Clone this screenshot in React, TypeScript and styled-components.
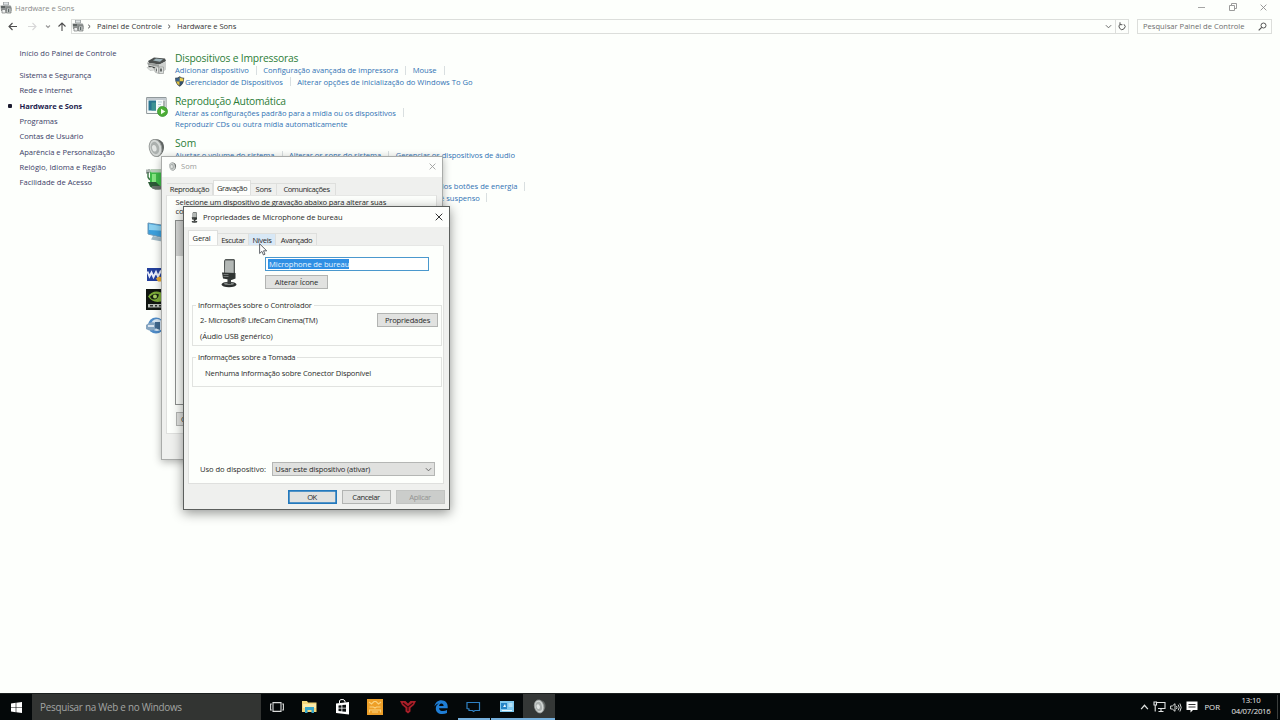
import React from "react";
import styled, { createGlobalStyle, css } from "styled-components";

const Global = createGlobalStyle`
  * { box-sizing: border-box; }
  body { margin: 0; overflow: hidden; background: #fdfffc; }
`;

const Screen = styled.div`
  position: relative;
  width: 1280px;
  height: 720px;
  display: flex;
  flex-direction: column;
  overflow: hidden;
  background: #fdfffc;
  color: #2a2b2a;
  font-family: "Open Sans", "Noto Sans", sans-serif;
  font-size: 7.6px;
  white-space: nowrap;
  cursor: default;
`;

const Text = styled.span<{ $ls?: number; $size?: number; $ml?: number }>`
  letter-spacing: ${(p) => p.$ls ?? 0}px;
  margin-left: ${(p) => p.$ml ?? 0}px;
  ${(p) => p.$size && css`font-size: ${p.$size}px;`}
`;

/* ---------- explorer window ---------- */

const TitleBar = styled.header`
  height: 15px;
  display: flex;
  align-items: center;
  padding: 0 13px 0 0;
  gap: 3px;
  color: #8b8b8b;
`;

const WindowControls = styled.div`
  margin-left: auto;
  margin-top: -1px;
  display: flex;
  align-items: center;
  gap: 23px;
`;

const NavRow = styled.nav`
  height: 21px;
  display: flex;
  align-items: center;
  padding: 1px 8px 0 8px;
`;

const Arrows = styled.div`
  width: 63px;
  display: flex;
  align-items: center;
`;

const AddressBar = styled.div`
  width: 1058px;
  height: 15px;
  display: flex;
  align-items: center;
  border: 1px solid #dcdedb;
  color: #333;
`;

const Crumb = styled.span<{ $l: number }>`
  margin: 0 4px 0 ${(p) => p.$l}px;
  display: flex;
`;

const AddressTools = styled.div`
  margin-left: auto;
  height: 13px;
  display: flex;
  align-items: center;
`;

const Refresh = styled.div`
  width: 13px;
  height: 13px;
  margin-left: 3px;
  display: flex;
  align-items: center;
  justify-content: center;
  border-left: 1px solid #dcdedb;
`;

const SearchField = styled.div`
  width: 135px;
  height: 15px;
  margin-left: 8px;
  padding: 0 4px 0 5px;
  display: flex;
  align-items: center;
  justify-content: space-between;
  border: 1px solid #dcdedb;
  color: #6e6e6e;
`;

const Body = styled.div`
  flex: 1;
  display: flex;
`;

const Sidebar = styled.aside`
  width: 146px;
  padding: 9px 0 0 7px;
  color: #3b3d66;
`;

const SideItem = styled.div<{ $active?: boolean; $home?: boolean }>`
  height: 15.33px;
  display: flex;
  align-items: center;
  margin-bottom: ${(p) => (p.$home ? 7 : 0)}px;
  font-weight: ${(p) => (p.$active ? 700 : 400)};
  color: ${(p) => (p.$active ? "#1d1d4e" : "inherit")};
`;

const Bullet = styled.span<{ $on?: boolean }>`
  width: 4px;
  height: 4px;
  margin: 1px 7.5px 0 1px;
  border-radius: 1px;
  background: ${(p) => (p.$on ? "#1b1b30" : "transparent")};
`;

const Categories = styled.main`
  padding-top: 16px;
`;

const Category = styled.section<{ $h: number }>`
  height: ${(p) => p.$h}px;
  display: flex;
`;

const IconCell = styled.div<{ $top: number }>`
  width: 29px;
  padding-top: ${(p) => p.$top}px;
`;

const CategoryTitle = styled.h2`
  margin: 0;
  height: 12.5px;
  line-height: 13px;
  font-weight: 400;
  font-size: 10.3px;
  color: #2c7d38;
`;

const LinkRow = styled.div<{ $indent?: number }>`
  height: 11.5px;
  display: flex;
  align-items: center;
  color: #3173b4;
  padding-left: ${(p) => p.$indent ?? 0}px;
`;

const Divider = styled.i<{ $l?: number; $r?: number }>`
  width: 1px;
  height: 9px;
  margin: 0 ${(p) => p.$r ?? 6.5}px 0 ${(p) => p.$l ?? 7}px;
  background: #d9dfe0;
`;

/* ---------- dialogs ---------- */

const Dialog = styled.div<{ $x: number; $y: number; $w: number; $h: number; $front?: boolean }>`
  position: absolute;
  left: ${(p) => p.$x}px;
  top: ${(p) => p.$y}px;
  width: ${(p) => p.$w}px;
  height: ${(p) => p.$h}px;
  display: flex;
  flex-direction: column;
  background: #eff0ee;
  border: 1px solid ${(p) => (p.$front ? "#5c5f5d" : "#a9aba9")};
  box-shadow: ${(p) => (p.$front ? "0 3px 11px rgba(0,0,0,.42)" : "0 2px 8px rgba(0,0,0,.3)")};
`;

const DialogTitle = styled.div<{ $front?: boolean }>`
  height: 20px;
  flex: none;
  display: flex;
  align-items: center;
  padding: ${(p) => (p.$front ? "0 6px 0 7px" : "0 6px 2px 6px")};
  background: #fdfefc;
  color: ${(p) => (p.$front ? "#2a2b2a" : "#9a9c9a")};
  > svg:last-child { margin-left: auto; }
`;

const Tabs = styled.div<{ $pad: number }>`
  display: flex;
  align-items: flex-end;
  height: 18px;
  flex: none;
  padding-left: ${(p) => p.$pad}px;
`;

const Tab = styled.div<{ $w: number; $active?: boolean; $hover?: boolean; $pb?: number }>`
  width: ${(p) => p.$w}px;
  height: ${(p) => (p.$active ? 15 : 12)}px;
  display: flex;
  align-items: center;
  justify-content: center;
  border: 1px solid #dedfdd;
  border-bottom: 0;
  border-left-width: ${(p) => (p.$active ? 1 : 0)}px;
  background: ${(p) => (p.$active ? "#fdfefc" : p.$hover ? "#d8e8f6" : "#eff0ee")};
  padding-bottom: ${(p) => p.$pb ?? 0}px;
`;

const Panel = styled.div<{ $h: number }>`
  height: ${(p) => p.$h}px;
  flex: none;
  margin: 0 5px 0 4px;
  background: #fdfffc;
  border: 1px solid #dfe0de;
  border-top-color: #e6e7e5;
`;

const DeviceIntro = styled.p`
  margin: 0;
  padding: 2px 0 0 8.5px;
  line-height: 9.3px;
`;

const DeviceList = styled.div`
  width: 250px;
  height: 185px;
  margin: 3px 0 0 8px;
  border: 1px solid #8c8f8d;
`;

const SelectedDevice = styled.div`
  height: 35px;
  background: #d4d6d4;
`;

const Button = styled.div<{ $w: number; $kind?: "default" | "disabled" }>`
  width: ${(p) => p.$w}px;
  height: 14px;
  display: flex;
  align-items: center;
  justify-content: center;
  background: #e1e2e0;
  border: 1px solid #b2b4b2;
  ${(p) => p.$kind === "default" && css`border-color: #2379bd; box-shadow: inset 0 0 0 .7px #2379bd;`}
  ${(p) => p.$kind === "disabled" && css`background: #cbcdcb; border-color: #c2c4c2; color: #929492;`}
`;

const ConfigureButton = styled(Button)`
  margin: 7px 0 0 9px;
  justify-content: flex-start;
  padding-left: 4px;
`;

const DeviceHeader = styled.div`
  height: 49px;
  display: flex;
  padding: 11px 0 0 31px;
  gap: 27px;
  > svg { margin-top: 1px; }
`;

const NameColumn = styled.div`
  display: flex;
  flex-direction: column;
  gap: 4px;
`;

const NameInput = styled.div`
  width: 164px;
  height: 14px;
  display: flex;
  align-items: center;
  border: 1px solid #4a98cd;
  padding-left: 2px;
  background: #fff;
`;

const Selection = styled.span`
  height: 10px;
  line-height: 10px;
  padding-left: 1px;
  background: #2f8fe4;
  color: #e8f5ff;
`;

const Group = styled.fieldset<{ $h: number; $mt: number }>`
  width: 250px;
  height: ${(p) => p.$h}px;
  margin: ${(p) => p.$mt}px 0 0 3px;
  padding: 0;
  border: 1px solid #e1e3e0;
  min-width: 0;
`;

const Legend = styled.legend`
  margin-left: 3px;
  padding: 0 2px;
  height: 10px;
  line-height: 10px;
`;

const GroupRow = styled.div<{ $pl: number; $h: number }>`
  height: ${(p) => p.$h}px;
  padding: 0 3px 0 ${(p) => p.$pl}px;
  display: flex;
  align-items: center;
  justify-content: space-between;
`;

const UsageRow = styled.div`
  display: flex;
  align-items: center;
  gap: 6.5px;
  margin: 75px 0 0 11px;
`;

const Select = styled.div`
  width: 162.500px;
  height: 14px;
  display: flex;
  align-items: center;
  justify-content: space-between;
  padding: 0 2px;
  background: #e0e1df;
  border: 1px solid #b4b6b4;
`;

const DialogButtons = styled.div`
  flex: 1;
  display: flex;
  align-items: center;
  justify-content: flex-end;
  gap: 5px;
  padding-right: 4px;
`;

const PointerLayer = styled.div`
  position: absolute;
  left: 259px;
  top: 243px;
`;

/* ---------- taskbar ---------- */

const Taskbar = styled.footer`
  height: 27px;
  flex: none;
  display: flex;
  background: #040809;
  border-top: 1px solid #1c201f;
  color: #e9eae9;
`;

const StartButton = styled.div`
  width: 32px;
  display: flex;
  align-items: center;
  justify-content: center;
`;

const TaskSearch = styled.div`
  width: 229px;
  display: flex;
  align-items: center;
  padding-left: 8px;
  background: #323432;
  color: #a2a4a2;
`;

const TaskItem = styled.div<{ $open?: boolean; $active?: boolean }>`
  width: 32px;
  margin-right: .8px;
  display: flex;
  align-items: center;
  justify-content: center;
  background: ${(p) => (p.$active ? "#343736" : "transparent")};
  border-bottom: 2px solid ${(p) => (p.$open ? "#76b0dd" : "transparent")};
  padding-top: 1px;
`;

const Tray = styled.div`
  margin-left: auto;
  padding-right: 2px;
  display: flex;
  align-items: center;
  gap: 4px;
`;

const Clock = styled.div`
  width: 54px;
  padding: 0 4px 2px 5px;
  display: flex;
  flex-direction: column;
  align-items: center;
  line-height: 11px;
  border-right: 1px solid #3b3e3d;
`;

/* ---------- icons ---------- */

const PrinterSmall = () => (
  <svg width="12" height="12" viewBox="0 0 12 12">
    <path d="M3.500 0h5v3h-5z" fill="#dfe4e5" stroke="#8a8f90" strokeWidth=".7" />
    <path d="M.500 3.500h10l1 1.500v4H1z" fill="#8f9493" />
    <path d="M1 4h4v2H1z" fill="#5e6463" />
    <path d="M2 7.500h3.500V11H2z" fill="#eef0f0" stroke="#777a79" strokeWidth=".7" />
    <path d="M6.500 6h4.500v5H6.500z" fill="#c9cdcc" stroke="#6d7271" strokeWidth=".7" />
    <path d="M8.700 7v3" stroke="#44504f" />
  </svg>
);

const PrinterIcon = () => (
  <svg width="22" height="20" viewBox="0 0 22 20">
    <path d="M2 5l6-3.500 11 1L20 5l-6 3.500L3 7z" fill="#4c504f" />
    <path d="M7 4.500l3-2 7 .7-3 2.500z" fill="#9fb4ba" />
    <path d="M1 6.500l12 2v2.500L2 9z" fill="#9a9e9c" />
    <path d="M13 8.500L20 5.500v8l-4 3.500-3-1z" fill="#cdd0ce" />
    <path d="M2 9.500l10 2v1.500l-9-1.500z" fill="#3e4241" />
    <path d="M1 11.500l5-.500 3 3-5 .500z" fill="#dfe1df" stroke="#a5a8a6" strokeWidth=".5" />
    <path d="M9 11h3.500v6.500L9 16z" fill="#e9ebe9" stroke="#8a8d8b" strokeWidth=".6" />
    <path d="M13 11h4.500v6.500H13z" fill="#dde0de" stroke="#8a8d8b" strokeWidth=".6" />
    <path d="M14 12.500h2v3h-2z" fill="#676c6a" />
    <path d="M10.500 12.500v3" stroke="#6b706e" />
  </svg>
);

const AutoPlayIcon = () => (
  <svg width="23" height="22" viewBox="0 0 23 22">
    <path d="M.6 1.500h19.500v16H.6z" fill="#f7faf9" stroke="#90999b" />
    <path d="M1 2h19v2H1z" fill="#c4cbd0" />
    <path d="M2.500 4.500h7.500v10H2.500z" fill="#27738e" />
    <path d="M5.500 6.500h4.500v8H5.500z" fill="#3d9293" />
    <path d="M12 6h4M12 8.500h3M12 11h3" stroke="#b8cfda" />
    <path d="M18 4.500v6" stroke="#626b6d" />
    <circle cx="16.500" cy="15.500" r="5" fill="#4cae35" stroke="#2e8d26" strokeWidth=".7" />
    <path d="M15 12.700l4.300 2.800L15 18.300z" fill="#f5fff1" />
  </svg>
);

const SpeakerIcon = ({ s = 20 }: { s?: number }) => (
  <svg width={s} height={s} viewBox="0 0 20 20">
    <path d="M9 1c5 0 9 3 9 8s-3 9-7 10l-3-2z" fill="#5f6462" />
    <ellipse cx="9.500" cy="10" rx="6.200" ry="8.700" transform="rotate(-14 9.500 10)" fill="#d4d8d6" stroke="#989c9a" />
    <ellipse cx="9" cy="10" rx="4.200" ry="6.300" transform="rotate(-14 9 10)" fill="#abb0ae" />
    <ellipse cx="8.300" cy="10.200" rx="2.200" ry="3.300" transform="rotate(-14 8.300 10.200)" fill="#e3e6e4" />
  </svg>
);

const BatteryIcon = () => (
  <svg width="24" height="24" viewBox="0 0 24 24">
    <path d="M2 4v5q1 3 4 3" fill="none" stroke="#3f7a48" strokeWidth="1.500" />
    <path d="M0 5l3.500-.500M1 1.500v3M3 1v3" stroke="#5e6a66" />
    <rect x="4" y="1" width="13" height="19" rx="3" fill="#3fba49" />
    <rect x="4" y="1" width="13" height="3.500" rx="1.700" fill="#b9cdb9" />
    <rect x="6" y="6" width="4" height="8" fill="#86e581" />
    <path d="M2 14h8l4 4-4 3.500-6-3z" fill="#2c5a36" />
    <path d="M6 18h12v2.500q-6 2.500-12 0z" fill="#68716a" />
  </svg>
);

const DisplayIcon = () => (
  <svg width="24" height="20" viewBox="0 0 24 20">
    <path d="M2 1l20 3v13L2 12z" fill="#3b9fdc" stroke="#6e98b5" />
    <path d="M3 2l18 3v4L3 8z" fill="#8bd0f0" />
    <path d="M7 14l9 2v3.500L5 17.500z" fill="#9fb9c6" />
  </svg>
);

const WaveIcon = () => (
  <svg width="22" height="17" viewBox="0 0 22 17">
    <path d="M1 1h20v13H1z" fill="#24409c" />
    <path d="M1.500 4.500l2 5 2-4 2 4.500 2.500-5 2 4.500 3-6" fill="none" stroke="#e9edfa" strokeWidth="1.900" />
    <path d="M10 11.500l3-2 4 1v4h-5z" fill="#ebaa2c" />
  </svg>
);

const GpuIcon = () => (
  <svg width="22" height="21" viewBox="0 0 22 21">
    <path d="M0 0h22v21H0z" fill="#101510" />
    <path d="M2 7.500q5-7 13-4v9Q7 14.500 2 7.500z" fill="#7cab38" />
    <path d="M4 7.500q4-4 9-2-1 5-5 5-3 0-4-3z" fill="#172112" />
    <circle cx="9" cy="7.500" r="2" fill="#a6cf62" />
    <path d="M2 15h18v3.500H2z" fill="#b9bfb8" />
    <path d="M4 16.700h3M9 16.700h2M13 16.700h4" stroke="#2c302c" strokeWidth="1.600" />
  </svg>
);

const SoundManagerIcon = () => (
  <svg width="22" height="19" viewBox="0 0 22 19">
    <circle cx="10" cy="9.500" r="8" fill="#4f8cc8" />
    <circle cx="11" cy="9" r="6" fill="#d8e7f4" />
    <path d="M0 9q4-4 10-2v6q-5 3-10 0z" fill="#86a5c0" />
    <path d="M9 6h5v8l-5-2z" fill="#41698f" />
    <path d="M2 10h6" stroke="#f4faff" strokeWidth="1.500" />
  </svg>
);

const ShieldIcon = () => (
  <svg width="10" height="11" viewBox="0 0 10 11">
    <path d="M4.700.3Q6.700 2 9.200 1.800 9.300 8 4.700 10.700 0 8 .1 1.800 2.700 2 4.700.3z" fill="#3c4852" />
    <path d="M4.700 1.300v4.200H1.100Q.9 4 1.100 2.600 3.200 2.500 4.700 1.300z" fill="#39628d" />
    <path d="M4.700 1.300Q6.500 2.600 8.400 2.600v2.900H4.700z" fill="#efd04b" />
    <path d="M1.200 5.500h3.500v4Q1.800 8 1.200 5.500z" fill="#e5c640" />
    <path d="M4.700 5.500h3.600Q7.600 8 4.700 9.500z" fill="#33526f" />
  </svg>
);

const MicIcon = ({ w, h }: { w: number; h: number }) => (
  <svg width={w} height={h} viewBox="0 0 18 30" preserveAspectRatio="none">
    <ellipse cx="9" cy="26.500" rx="7.500" ry="2.800" fill="#2d3130" />
    <ellipse cx="9" cy="25.700" rx="5" ry="1.200" fill="#808583" />
    <path d="M7.500 20h3.500v6H7.500z" fill="#3a3e3d" />
    <path d="M4 2.500L5.500 1h8.500l1 1v15H4z" fill="#545957" />
    <path d="M5.200 2.500h8.500V15H4.800z" fill="#b3b8b5" />
    <path d="M2 14.500l13.500 .5v5.500l-4 1.500-8.500-1.500z" fill="#303533" />
    <path d="M3.500 16.500h5M3.500 18.500h5" stroke="#757a78" />
  </svg>
);

const Close = ({ c, s = 8 }: { c: string; s?: number }) => (
  <svg width={s} height={s} viewBox="0 0 8 8">
    <path d="M.7.7l6.600 6.600M7.300.7L.7 7.300" stroke={c} strokeWidth="1" />
  </svg>
);

const Chevron = ({ dir = "down", c = "#666", s = 7 }: { dir?: "down" | "right" | "up"; c?: string; s?: number }) => (
  <svg width={s} height={s} viewBox="0 0 8 8">
    <path
      d={dir === "down" ? "M1 2.500l3 3 3-3" : dir === "up" ? "M1 5.500l3-3.500 3 3.500" : "M2.500 2L4.700 4 2.500 6"}
      fill="none" stroke={c} strokeWidth="1.100"
    />
  </svg>
);

const ArrowSvg = styled.svg<{ $ml?: number }>`
  margin-left: ${(p) => p.$ml ?? 0}px;
`;

const Arrow = ({ d, c, ml, w = 10 }: { d: string; c: string; ml?: number; w?: number }) => (
  <ArrowSvg $ml={ml} width={w} height="9" viewBox={`0 0 ${w} 9`}>
    <path d={d} fill="none" stroke={c} strokeWidth="1.100" />
  </ArrowSvg>
);

/* ---------- data ---------- */

const sideItems: { label: string; ls: number; active?: boolean }[] = [
  { label: "Sistema e Segurança", ls: -0.08 },
  { label: "Rede e Internet", ls: -0.11 },
  { label: "Hardware e Sons", ls: -0.08, active: true },
  { label: "Programas", ls: -0.05 },
  { label: "Contas de Usuário", ls: -0.08 },
  { label: "Aparência e Personalização", ls: -0.06 },
  { label: "Relógio, Idioma e Região", ls: 0 },
  { label: "Facilidade de Acesso", ls: 0 },
];

export default function App() {
  return (
    <Screen>
      <Global />
      <TitleBar>
        <PrinterSmall />
        <Text $ls={-0.07}>Hardware e Sons</Text>
        <WindowControls>
          <svg width="8" height="8" viewBox="0 0 8 8"><path d="M0 4.500h7" stroke="#a5a5a5" /></svg>
          <svg width="8" height="8" viewBox="0 0 8 8"><path d="M.5 2.500h5v5h-5zM2.500 2.500v-2h5v5h-2" fill="none" stroke="#9b9b9b" /></svg>
          <Close c="#8b8b8b" s={7} />
        </WindowControls>
      </TitleBar>
      <NavRow>
        <Arrows>
          <Arrow d="M9 4.500H1M4.500 1L1 4.500 4.500 8" c="#4d4d4d" />
          <Arrow d="M1 4.500h8M5.500 1L9 4.500 5.500 8" c="#d8d8d8" ml={9} />
          <Arrow w={6} d="M1 3.500l2 2 2-2" c="#999" ml={8} />
          <Arrow d="M5 9V1M1.500 4.500L5 1l3.500 3.500" c="#4d4d4d" ml={6} />
        </Arrows>
        <AddressBar>
          <PrinterSmall />
          <Crumb $l={2}><Chevron dir="right" c="#444" /></Crumb>
          <Text>Painel de Controle</Text>
          <Crumb $l={4}><Chevron dir="right" c="#444" /></Crumb>
          <Text $ls={-0.07}>Hardware e Sons</Text>
          <AddressTools>
            <Chevron />
            <Refresh>
              <svg width="8" height="9" viewBox="0 0 8 9"><path d="M6 2.300A3 3 0 1 1 2.500 2M2 .3v2.400h2.400" fill="none" stroke="#555" /></svg>
            </Refresh>
          </AddressTools>
        </AddressBar>
        <SearchField>
          <Text>Pesquisar Painel de Controle</Text>
          <svg width="9" height="9" viewBox="0 0 9 9"><circle cx="5.500" cy="3.500" r="2.500" fill="none" stroke="#555" /><path d="M3.700 5.300L.7 8.300" stroke="#555" strokeWidth="1.200" /></svg>
        </SearchField>
      </NavRow>

      <Body>
        <Sidebar>
          <SideItem $home><Bullet /><Text>Início do Painel de Controle</Text></SideItem>
          {sideItems.map((i) => (
            <SideItem key={i.label} $active={i.active}>
              <Bullet $on={i.active} />
              <Text $ls={i.ls}>{i.label}</Text>
            </SideItem>
          ))}
        </Sidebar>
        <Categories>
          <Category $h={42.500}>
            <IconCell $top={4}><PrinterIcon /></IconCell>
            <div>
              <CategoryTitle><Text $ls={-0.19}>Dispositivos e Impressoras</Text></CategoryTitle>
              <LinkRow>
                <Text $ls={0.02}>Adicionar dispositivo</Text><Divider />
                <Text $ls={-0.02}>Configuração avançada de impressora</Text><Divider />
                <Text>Mouse</Text><Divider />
              </LinkRow>
              <LinkRow>
                <ShieldIcon />
                <Text $ls={-0.05}>Gerenciador de Dispositivos</Text><Divider />
                <Text $ls={0.01}>Alterar opções de inicialização do Windows To Go</Text>
              </LinkRow>
            </div>
          </Category>
          <Category $h={42.500}>
            <IconCell $top={1}><AutoPlayIcon /></IconCell>
            <div>
              <CategoryTitle><Text $ls={-0.24}>Reprodução Automática</Text></CategoryTitle>
              <LinkRow><Text $ls={-0.045}>Alterar as configurações padrão para a mídia ou os dispositivos</Text><Divider /></LinkRow>
              <LinkRow><Text $ls={-0.03}>Reproduzir CDs ou outra mídia automaticamente</Text></LinkRow>
            </div>
          </Category>
          <Category $h={31}>
            <IconCell $top={1}><SpeakerIcon /></IconCell>
            <div>
              <CategoryTitle><Text $ls={-0.1}>Som</Text></CategoryTitle>
              <LinkRow>
                <Text $ls={-0.03}>Ajustar o volume do sistema</Text><Divider />
                <Text $ls={-0.04}>Alterar os sons do sistema</Text><Divider />
                <Text $ls={-0.06}>Gerenciar os dispositivos de áudio</Text>
              </LinkRow>
            </div>
          </Category>
          <Category $h={54}>
            <IconCell $top={0}><BatteryIcon /></IconCell>
            <div>
              <CategoryTitle />
              <LinkRow $indent={264}><Text>dos botões de energia</Text><Divider $l={6} /></LinkRow>
              <LinkRow $indent={265}><Text>é suspenso</Text><Divider $l={6} /></LinkRow>
            </div>
          </Category>
          <Category $h={45}><IconCell $top={0}><DisplayIcon /></IconCell></Category>
          <Category $h={22}><IconCell $top={0}><WaveIcon /></IconCell></Category>
          <Category $h={27}><IconCell $top={0}><GpuIcon /></IconCell></Category>
          <Category $h={22}><IconCell $top={0}><SoundManagerIcon /></IconCell></Category>
        </Categories>
      </Body>

      <Taskbar>
        <StartButton>
          <svg width="11" height="11" viewBox="0 0 11 11"><path d="M0 1.500l4.700-.7v4.400H0zM5.300.7L11 0v5.200H5.300zM0 5.800h4.700v4.400L0 9.500zM5.300 5.800H11V11l-5.700-.7z" fill="#fff" /></svg>
        </StartButton>
        <TaskSearch><Text $size={9.900} $ls={-0.27}>Pesquisar na Web e no Windows</Text></TaskSearch>
        <TaskItem>
          <svg width="14" height="10" viewBox="0 0 14 10"><path d="M3 .6h8v8.800H3zM1.800 2H.6v6h1.200M12.200 2h1.200v6h-1.200" fill="none" stroke="#d9dbda" strokeWidth="1.100" /></svg>
        </TaskItem>
        <TaskItem>
          <svg width="15" height="13" viewBox="0 0 15 13"><path d="M0 1h5l1 1.500h8.500V12H0z" fill="#f3d77c" /><path d="M1 4h13v4H1z" fill="#fbeaa9" /><path d="M3 7h9v6H9.500v-3h-4v3H3z" fill="#37a6c9" /></svg>
        </TaskItem>
        <TaskItem>
          <svg width="15" height="16" viewBox="0 0 15 16"><path d="M1 4.500L14 3v12.500L1 14z" fill="#fff" /><path d="M4.500 4V2q0-1.500 2.500-1.500T10 2v1.500" fill="none" stroke="#fff" /><path d="M3.500 6.500l3-.3v2.600h-3zM7.300 6.100l3.700-.4v3.100H7.300zM3.500 9.600h3v2.700l-3-.3zM7.300 9.600H11v3.200l-3.700-.4z" fill="#0a0e0f" /></svg>
        </TaskItem>
        <TaskItem>
          <svg width="16" height="16" viewBox="0 0 16 16"><path d="M0 0h16v16H0z" fill="#ee9f28" /><path d="M2 3l2.500 2L7 2.500h2L11.500 5 14 3M2.500 8h4l1.500 1 1.500-1h4M2.500 13.500V11h11v2.500M5 13h6" fill="none" stroke="#fbd37e" strokeWidth="1.100" /></svg>
        </TaskItem>
        <TaskItem>
          <svg width="16" height="14" viewBox="0 0 16 14"><path d="M0 1h5.500L8 3.500 10.500 1H16l-2 4-3.500 3v3.500L8 13.500l-2.500-2V8L2 5z" fill="#a81f29" /><path d="M3 3l5 4 5-4M8 7v4" fill="none" stroke="#2b0709" strokeWidth="1.100" /></svg>
        </TaskItem>
        <TaskItem>
          <svg width="14" height="14" viewBox="0 0 14 14"><path d="M.5 6.500C1.200 2.500 4 .3 7.300.3c4 0 6.400 2.900 6.400 6.200v1.700H5c.2 2 2 2.900 4 2.900 1.600 0 2.900-.4 4-1v2.800c-1.300.7-2.900 1.100-4.800 1.100-3.900 0-6.400-2.200-6.400-5.600C1.800 6 3.200 4.300 5 3.500 2.800 3.700 1.300 4.900.5 6.500zM5.100 6h4.500c0-1.500-.8-2.400-2.200-2.400S5.300 4.600 5.100 6z" fill="#1f7ed6" /></svg>
        </TaskItem>
        <TaskItem $open>
          <svg width="15" height="12" viewBox="0 0 15 12"><path d="M1 1.500h12.500v8H9l-1.500 1-1-1H3v-1.500L1 7.500z" fill="none" stroke="#2f80c2" strokeWidth="1.200" /></svg>
        </TaskItem>
        <TaskItem $open>
          <svg width="14" height="11" viewBox="0 0 14 11"><path d="M0 0h14v11H0z" fill="#7fc8ee" /><path d="M1 2h6v6H1z" fill="#2484c6" /><path d="M3 6l2-3 1 3z" fill="#e6f6ff" /><path d="M8.500 3h4M8.500 5h4M2 9.500h10" stroke="#eaf8ff" /></svg>
        </TaskItem>
        <TaskItem $open $active><SpeakerIcon s={15} /></TaskItem>
        <Tray>
          <Chevron dir="up" c="#e0e2e1" s={9} />
          <svg width="13" height="12" viewBox="0 0 13 12"><path d="M4 1.500h8v6H5M8 7.500V10M5.500 10.500h5M1 1h2.500v3H1zM2.200 4v6.500" fill="none" stroke="#e2e4e3" strokeWidth="1.100" /></svg>
          <svg width="12" height="11" viewBox="0 0 12 11"><path d="M.6 4h1.700L5 1.700v7.600L2.300 7H.6zM6.500 4q1 1.500 0 3M8.200 2.700q2 2.800 0 5.600M9.900 1.500q2.600 4 0 8" fill="none" stroke="#d6d8d7" /></svg>
          <svg width="12" height="12" viewBox="0 0 12 12"><path d="M.5.500h11v8.500H7L4.500 11.500V9h-4z" fill="#fff" /><path d="M2.500 3.500h7M2.500 6h7" stroke="#333" /></svg>
          <Text $size={7.800} $ml={2}>POR</Text>
          <Clock><Text $size={7.800} $ls={-0.2}>13:10</Text><Text $size={7.800} $ls={-0.22}>04/07/2016</Text></Clock>
        </Tray>
      </Taskbar>

      <Dialog $x={161} $y={156} $w={282} $h={304}>
        <DialogTitle>
          <SpeakerIcon s={9} />
          <Text $ml={4}>Som</Text>
          <Close c="#9a9c9a" s={7} />
        </DialogTitle>
        <Tabs $pad={5}>
          <Tab $w={46} $pb={1}><Text $ls={-0.37}>Reprodução</Text></Tab>
          <Tab $w={38} $active $pb={1}><Text $ls={-0.38}>Gravação</Text></Tab>
          <Tab $w={26} $pb={1}><Text $ls={-0.3}>Sons</Text></Tab>
          <Tab $w={59} $pb={1}><Text $ls={-0.45} $ml={1}>Comunicações</Text></Tab>
        </Tabs>
        <Panel $h={239}>
          <DeviceIntro>
            <Text $ls={-0.14}>Selecione um dispositivo de gravação abaixo para alterar suas</Text><br />
            <Text $ls={-0.15}>co</Text>
          </DeviceIntro>
          <DeviceList><SelectedDevice /></DeviceList>
          <ConfigureButton $w={58}>C</ConfigureButton>
        </Panel>
      </Dialog>

      <Dialog $front $x={183} $y={206} $w={267} $h={304}>
        <DialogTitle $front>
          <MicIcon w={7} h={11} />
          <Text $ml={5} $ls={-0.06}>Propriedades de Microphone de bureau</Text>
          <Close c="#333" />
        </DialogTitle>
        <Tabs $pad={4}>
          <Tab $w={30} $active><Text $ls={-0.25} $ml={-3}>Geral</Text></Tab>
          <Tab $w={31}><Text $ls={-0.38}>Escutar</Text></Tab>
          <Tab $w={27} $hover><Text $ls={-0.35}>Níveis</Text></Tab>
          <Tab $w={41}><Text $ls={-0.38} $ml={1}>Avançado</Text></Tab>
        </Tabs>
        <Panel $h={239}>
          <DeviceHeader>
            <MicIcon w={18} h={30} />
            <NameColumn>
              <NameInput><Selection><Text $ls={-0.05}>Microphone de bureau</Text></Selection></NameInput>
              <Button $w={63}><Text $ls={-0.15}>Alterar Ícone</Text></Button>
            </NameColumn>
          </DeviceHeader>
          <Group $h={46} $mt={5}>
            <Legend><Text $ls={-0.13}>Informações sobre o Controlador</Text></Legend>
            <GroupRow $pl={7} $h={20}><Text $ls={-0.19}>2- Microsoft® LifeCam Cinema(TM)</Text><Button $w={61}><Text $ls={-0.2}>Propriedades</Text></Button></GroupRow>
            <GroupRow $pl={7} $h={11}><Text $ls={-0.08}>(Áudio USB genérico)</Text></GroupRow>
          </Group>
          <Group $h={35} $mt={6}>
            <Legend><Text $ls={-0.24}>Informações sobre a Tomada</Text></Legend>
            <GroupRow $pl={12} $h={22}><Text $ls={-0.16}>Nenhuma Informação sobre Conector Disponível</Text></GroupRow>
          </Group>
          <UsageRow>
            <Text $ls={-0.05}>Uso do dispositivo:</Text>
            <Select><Text $ls={-0.16}>Usar este dispositivo (ativar)</Text><Chevron /></Select>
          </UsageRow>
        </Panel>
        <DialogButtons>
          <Button $w={49} $kind="default"><Text $ls={-0.6} $ml={-1}>OK</Text></Button>
          <Button $w={49}><Text $ls={-0.42} $ml={-1}>Cancelar</Text></Button>
          <Button $w={49} $kind="disabled"><Text $ls={-0.42} $ml={-1}>Aplicar</Text></Button>
        </DialogButtons>
      </Dialog>

      <PointerLayer>
        <svg width="9" height="13" viewBox="0 0 9 13"><path d="M.6.8v9.700l2.300-2.100 1.500 3.500 1.600-.7-1.500-3.400h3.200z" fill="#fff" stroke="#3a3f46" strokeWidth=".8" /></svg>
      </PointerLayer>
    </Screen>
  );
}
